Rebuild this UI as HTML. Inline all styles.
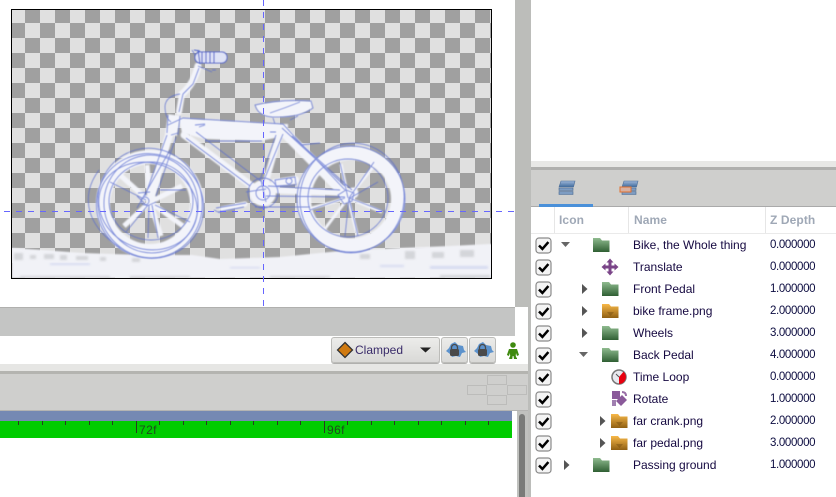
<!DOCTYPE html>
<html><head><meta charset="utf-8"><style>
html,body{margin:0;padding:0;background:#fff}
body{position:relative;width:836px;height:497px;overflow:hidden;font-family:"Liberation Sans",sans-serif}
div{position:absolute}
.r{left:633px;font-size:12px;color:#150840;line-height:14px;white-space:nowrap}
.z{left:770px;font-size:11.5px;letter-spacing:-.35px;color:#0c0c40;line-height:14px}
.h{top:213px;font-size:12px;letter-spacing:.1px;font-weight:bold;color:#9fa8b6;line-height:14px}
.btn{top:337px;height:26px;box-sizing:border-box;border:1px solid #bcbcb9;border-radius:3px;background:linear-gradient(#ececea,#d9d9d7);box-shadow:0 1px 0 #b0b0ae}
</style></head><body>
<div style="left:515px;top:0;width:13px;height:307px;background:#bcbdba"></div>
<div style="left:0;top:307px;width:515px;height:29px;background:#c4c5c4;border-top:1px solid #b0b0ae;box-sizing:border-box"></div>
<div style="left:0;top:364px;width:528px;height:7px;background:#e6e6e4"></div>
<div style="left:0;top:371px;width:528px;height:3px;background:#b4b4b0"></div>
<div style="left:0;top:374px;width:528px;height:37px;background:#cfcfcd;border-bottom:1px solid #b4b4b2;box-sizing:border-box"></div>
<div style="left:0;top:411px;width:512px;height:10px;background:#7589b3"></div>
<div style="left:0;top:421px;width:512px;height:17px;background:#00cc00"></div>
<div style="left:517px;top:411px;width:11px;height:86px;background:#c0c1be"></div>
<div style="left:519px;top:414px;width:6px;height:83px;background:#7a7b79;border-radius:3px 3px 0 0"></div>
<div style="left:528px;top:0;width:3px;height:497px;background:#bcbdba"></div>
<div style="left:531px;top:161px;width:305px;height:6px;background:#e8e8e6"></div>
<div style="left:531px;top:167px;width:305px;height:3px;background:#b0b0ae"></div>
<div style="left:531px;top:170px;width:305px;height:37px;background:#cfcfcd;border-bottom:1px solid #aaa;box-sizing:border-box"></div>
<div style="left:539px;top:204px;width:54px;height:3px;background:#4a90d9"></div>
<div style="left:531px;top:233px;width:305px;height:1px;background:#eaeaea"></div>
<div style="left:554px;top:207px;width:1px;height:26px;background:#e6e6e6"></div>
<div style="left:628px;top:207px;width:1px;height:26px;background:#e6e6e6"></div>
<div style="left:765px;top:207px;width:1px;height:26px;background:#e6e6e6"></div>
<div class="h" style="left:559px">Icon</div><div class="h" style="left:634px">Name</div><div class="h" style="left:770px">Z Depth</div>

<!-- Canvas -->
<div style="left:11px;top:9px;width:479px;height:268px;border:1.5px solid #000;background-color:#e0e0e0;background-image:conic-gradient(#a0a0a0 25%,transparent 0 50%,#a0a0a0 0 75%,transparent 0);background-size:30px 30px;background-position:-2px -2px"></div>

<svg width="836" height="497" style="position:absolute;left:0;top:0" xmlns="http://www.w3.org/2000/svg">
<defs>
<filter id="b" x="-5%" y="-5%" width="110%" height="110%"><feGaussianBlur stdDeviation=".7"/></filter>
<filter id="bl" x="-5%" y="-5%" width="110%" height="110%"><feGaussianBlur stdDeviation=".45"/></filter>
<filter id="b2" x="-5%" y="-5%" width="110%" height="110%"><feGaussianBlur stdDeviation="1"/></filter>
<linearGradient id="gf" x1="0" y1="0" x2="0" y2="1"><stop offset="0" stop-color="#8fbb8f"/><stop offset="1" stop-color="#2f5f33"/></linearGradient>
<linearGradient id="of" x1="0" y1="0" x2="0" y2="1"><stop offset="0" stop-color="#f8b848"/><stop offset="1" stop-color="#8f5f12"/></linearGradient>
<linearGradient id="st" x1="0" y1="0" x2="0" y2="1"><stop offset="0" stop-color="#9db6d8"/><stop offset="1" stop-color="#3f6a9c"/></linearGradient>
<symbol id="cb" width="18" height="18" viewBox="0 0 18 18" overflow="visible">
<rect x="1" y="1" width="15" height="15" rx="3" fill="#f4f4f4" stroke="#8a8a8a" stroke-width="1.2"/>
<path d="M4 8.5l3.4 3.4 6-6.8" fill="none" stroke="#000" stroke-width="2.5"/></symbol>
<symbol id="fg" width="17" height="15" viewBox="0 0 17 15"><path d="M0 1h7l2 2.5h7.5V15H0z" fill="url(#gf)"/></symbol>
<symbol id="fo" width="17" height="15" viewBox="0 0 17 15"><path d="M0 1h7l2 2.5h7.5V15H0z" fill="url(#of)"/><path d="M5 9h7l-3.500 4z" fill="#7a5010" opacity=".5"/></symbol>
<symbol id="ar" width="8" height="12" viewBox="0 0 8 12"><path d="M1 1l5.500 5-5.500 5z" fill="#555"/></symbol>
<symbol id="ad" width="12" height="8" viewBox="0 0 12 8"><path d="M1 1h9L5.500 6z" fill="#666"/></symbol>
<symbol id="lk" width="24" height="20" viewBox="0 0 24 20"><path d="M12 2l3 3 5 1 1 4 2 2-4 1-2 4-4-1-4 1-2-3-4-3 3-3 2-4z" fill="#5c92cc"/><path d="M8.500 9.500V7.500a3 3 0 0 1 6 0V9.500" fill="none" stroke="#4a4a4a" stroke-width="1.300"/><rect x="7" y="9" width="9" height="7" rx="1.500" fill="#4a4a4a"/></symbol>
<symbol id="stack" width="18" height="16" viewBox="0 0 18 16"><path d="M3 1h14l-1.500 6H1z" fill="url(#st)" stroke="#4e7099" stroke-width=".6"/><path d="M1 8h14v2.500H1zM1 11.500h14V14.500H1z" fill="#7d9cc2" stroke="#47678f" stroke-width=".6"/></symbol>
</defs>

<!-- Ground -->
<g clip-path="url(#cc)">
<clipPath id="cc"><rect x="12" y="10" width="479" height="268"/></clipPath>
<path d="M12 248l30 2 40 3 60 2 50 0 28 4 60-2 30-3 30-3 60-3 50-2 40-2 10 0V278H12z" fill="#f1f2f7" filter="url(#b)"/>
<g filter="url(#b2)" fill="#cfd0d4" opacity=".85">
<rect x="14" y="253" width="9" height="7"/><rect x="30" y="255" width="6" height="4"/><rect x="44" y="254" width="10" height="5"/><rect x="60" y="255" width="7" height="5"/><rect x="76" y="256" width="12" height="4"/><rect x="100" y="257" width="6" height="4"/><rect x="132" y="258" width="8" height="4"/>
<rect x="405" y="251" width="10" height="8"/><rect x="432" y="252" width="12" height="6"/><rect x="460" y="250" width="14" height="7"/><rect x="360" y="254" width="10" height="5"/>
<rect x="20" y="276" width="90" height="2"/><rect x="130" y="276" width="60" height="2"/><rect x="270" y="276" width="60" height="2"/><rect x="440" y="275" width="50" height="3"/>
</g>
<g filter="url(#b2)" fill="#d3d8f0" opacity=".9">
<rect x="50" y="263" width="40" height="2"/><rect x="380" y="265" width="24" height="2"/><rect x="430" y="266" width="58" height="3"/><rect x="230" y="267" width="30" height="1.500"/>
</g>
</g>

<!-- Bike: white body -->
<g filter="url(#b)" fill="none" stroke="#f3f4fa" stroke-linecap="round">
<ellipse cx="150" cy="204" rx="47" ry="47" stroke-width="14" transform="rotate(-20 150 204)"/>
<ellipse cx="351" cy="199" rx="47" ry="46" stroke-width="14"/>
<g stroke-width="5" stroke-linecap="butt">
<path d="M150 202L120 175M150 202L182 186M150 202L183 226M150 202L161 236M150 202L124 226M150 202L147 165"/>
<path d="M348 198L373 167M348 198L341 164M348 198L382 212M348 198L357 234M348 198L324 230M348 198L312 208" stroke-width="3"/>
</g>
<path d="M174 115L171 135" stroke-width="12" stroke-linecap="butt"/>
<path d="M170 132L150 200" stroke-width="8"/>
<path d="M179 112L182 94" stroke-width="6"/>
<path d="M182 94Q194 84 198 66" stroke-width="7"/>
<path d="M184 135L252 186" stroke-width="7"/>
<path d="M279 136L265 185" stroke-width="6"/>
<path d="M282 130L345 194" stroke-width="10"/>
<path d="M268 190L345 193" stroke-width="6"/>
<path d="M222 209L245 204" stroke-width="5"/>
<path d="M275 183L295 180" stroke-width="8"/>
<path d="M345 197l8-4" stroke-width="11"/>
</g>
<g filter="url(#b)" fill="#f3f4fa">
<path d="M179 118L283 124 290 135 260 141 205 139 182 133z"/>
<path d="M256 105Q280 99 311 101L312 108Q300 118 272 117 258 116 256 105z"/>
<circle cx="263" cy="193" r="13"/>
<rect x="276" y="124" width="12" height="4"/>
</g>
<!-- Bike: blue lines -->
<g fill="none" stroke="#5569cf" stroke-width=".9" opacity=".75" filter="url(#bl)">
<ellipse cx="150" cy="203" rx="52" ry="55" transform="rotate(-15 150 203)"/>
<ellipse cx="150" cy="206" rx="54" ry="52" transform="rotate(25 150 206)"/>
<ellipse cx="151" cy="204" rx="47" ry="49" transform="rotate(-10 151 204)"/>
<ellipse cx="151" cy="201" rx="42" ry="39"/>
<ellipse cx="148" cy="206" rx="50" ry="43" transform="rotate(20 148 206)"/>
<path d="M99 170Q84 190 90 212 96 232 120 248"/>
<path d="M110 182L146 200M148 205L126 232M152 205L158 238M149 205L148 238M170 150L137 208M155 205L190 222M160 190L186 190"/>
<ellipse cx="351" cy="199" rx="54" ry="53"/>
<ellipse cx="352" cy="198" rx="52" ry="55" transform="rotate(12 352 198)"/>
<ellipse cx="348" cy="198" rx="40" ry="39"/>
<path d="M349 198L374 162M340 163L348 198M349 198L386 212M349 198L358 236M349 198L345 236M345 198L310 210M350 198L378 182"/>
<path d="M168 125L183 118 283 124 292 134 345 190M178 133L171 135M167 135L145 196M176 137L156 196M168 115L167 133M180 116L178 135"/>
<path d="M186 138L250 186M196 132L262 182M205 141L262 141M283 134L262 185M276 135L260 180M292 136L352 190M282 128L345 186"/>
<path d="M266 196L345 197M268 186L340 190M255 207L310 207"/>
<path d="M180 94Q166 96 165 106 165 118 171 122M179 112L183 94 193 84 199 68M192 50L198 60M198 66L212 72M212 70h4"/>
<path d="M255 105Q280 99 311 101L313 108Q300 118 272 117 258 116 255 105zM270 113Q285 108 300 102M273 118l2 6M298 116l-8 4"/>
<circle cx="263" cy="193" r="15"/><circle cx="263" cy="193" r="7"/><path d="M246 192l20-3M261 180l5 22"/>
<path d="M216 208l30-5M218 212l26-5M214 210l6 3M275 180l20-3 1 8-20 1z"/><circle cx="289" cy="181" r="3"/>
<path d="M338 195l8-5 8 3-2 8-8 3z"/><circle cx="145" cy="201" r="4"/><path d="M138 193l12-1M137 196l10 10 9-4"/>
<path d="M195 125l10-1M205 125l-6 2M270 132l6 0M300 145l20-2"/>
</g>
<!-- Grip -->
<g filter="url(#bl)">
<rect x="195" y="52" width="32" height="11" rx="5" fill="#dfe3f6" stroke="#4f64cc"/>
<path d="M198 50l2 14M202 52v11M206 52v11M210 52v11M214 52v11M194 50l6 1" stroke="#4f64cc" stroke-width="1.100" fill="none"/>
</g>

<!-- Guides -->
<path d="M263.500 0V307" stroke="#6666ff" stroke-dasharray="6 6" stroke-width="1" fill="none"/>
<path d="M4 211.500H515" stroke="#6666ff" stroke-dasharray="6 6" stroke-width="1" fill="none"/>

<!-- Timeline ticks -->
<g stroke="#2a3a20" stroke-width="1">
<path d="M18.500 421v4M42.500 421v4M65.500 421v4M89.500 421v4M112.500 421v4M159.500 421v4M183.500 421v4M206.500 421v4M230.500 421v4M253.500 421v4M277.500 421v4M300.500 421v4M347.500 421v4M371.500 421v4M394.500 421v4M418.500 421v4M441.500 421v4M465.500 421v4M488.500 421v4"/>
<path d="M136.500 421v12M324.500 421v12"/>
</g>
<!-- Pad -->
<g fill="none" stroke="#bcbcba"><rect x="487.500" y="375.500" width="19" height="9"/><rect x="467.500" y="385.500" width="19" height="9"/><rect x="507.500" y="385.500" width="19" height="9"/><rect x="487.500" y="395.500" width="19" height="9"/></g>
<!-- Tab icons -->
<use href="#stack" x="558" y="180"/>
<use href="#stack" x="621" y="180"/>
<rect x="620" y="187" width="11" height="5" fill="#d8b0a0" stroke="#e07030"/>

<!-- Checkboxes -->
<use href="#cb" x="535" y="237"/><use href="#cb" x="535" y="259"/><use href="#cb" x="535" y="281"/><use href="#cb" x="535" y="303"/><use href="#cb" x="535" y="325"/><use href="#cb" x="535" y="347"/><use href="#cb" x="535" y="369"/><use href="#cb" x="535" y="391"/><use href="#cb" x="535" y="413"/><use href="#cb" x="535" y="435"/><use href="#cb" x="535" y="457"/>

<!-- Tree arrows -->
<use href="#ad" x="560" y="241"/><use href="#ar" x="581" y="283"/><use href="#ar" x="581" y="305"/><use href="#ar" x="581" y="327"/><use href="#ad" x="578" y="351"/><use href="#ar" x="599" y="415"/><use href="#ar" x="599" y="437"/><use href="#ar" x="563" y="459"/>

<!-- Folders -->
<use href="#fg" x="593" y="237"/><use href="#fg" x="602" y="281"/><use href="#fo" x="602" y="303"/><use href="#fg" x="602" y="325"/><use href="#fg" x="602" y="347"/><use href="#fo" x="611" y="413"/><use href="#fo" x="611" y="435"/><use href="#fg" x="593" y="457"/>

<!-- Translate -->
<path d="M610 258.500l3.500 4h-2V265.500h3v-2l4 3.500-4 3.500v-2h-3v3h2l-3.500 4-3.500-4h2v-3h-3v2l-4-3.500 4-3.500v2h3V262.500h-2z" fill="#7a4488"/>
<!-- Time loop -->
<circle cx="619" cy="377" r="7" fill="#e8e8ee" stroke="#777" stroke-width="1.500"/>
<path d="M619 377l4.500-5.300A7 7 0 0 1 619 384z" fill="#e8000f"/>
<path d="M619 377l-3-3" stroke="#555" stroke-width="1"/>
<!-- Rotate -->
<path d="M612 391h8v8h-8z" fill="#8a5a9a"/>
<path d="M616 401l6-6 5 5-6 6z" fill="#8a5a9a"/>
<path d="M612 400h4v6h-4z" fill="#a07fb0"/>
<path d="M622 392q4 0 4 4" stroke="#9a70a8" stroke-width="2" fill="none"/>
<!-- Stickman -->
<g fill="#3f8a10"><circle cx="513" cy="345" r="2.800"/><path d="M509 349h8l2 6-2 1-1-3-.3 3 1 2 .3 0v1h-3l-.5-3h-.8l-.5 3h-3v-1l1-2-.3-3-1 3-2-1z"/></g>
</svg>

<!-- Text labels timeline -->
<div style="left:139px;top:423px;font-size:12px;letter-spacing:.4px;color:#1f4a1f;line-height:14px">72f</div>
<div style="left:327px;top:423px;font-size:12px;letter-spacing:.4px;color:#1f4a1f;line-height:14px">96f</div>

<!-- Buttons -->
<div class="btn" style="left:331px;width:109px"></div>
<div class="btn" style="left:441px;width:27px"></div>
<div class="btn" style="left:469px;width:27px"></div>
<svg width="836" height="497" style="position:absolute;left:0;top:0">
<path d="M345 342.500l7.500 7.500-7.500 7.500-7.500-7.500z" fill="#d07a10" stroke="#333" stroke-width="1.300"/>
<path d="M420 347.500h11l-5.500 5z" fill="#222"/>
<use href="#lk" x="443" y="340"/><use href="#lk" x="471" y="340"/>
</svg>
<div style="left:355px;top:343px;font-size:12px;color:#3a2c6a;line-height:14px">Clamped</div>

<!-- Rows -->
<div class="r" style="top:238px">Bike, the Whole thing</div><div class="z" style="top:238px">0.000000</div>
<div class="r" style="top:260px">Translate</div><div class="z" style="top:260px">0.000000</div>
<div class="r" style="top:282px">Front Pedal</div><div class="z" style="top:282px">1.000000</div>
<div class="r" style="top:304px">bike frame.png</div><div class="z" style="top:304px">2.000000</div>
<div class="r" style="top:326px">Wheels</div><div class="z" style="top:326px">3.000000</div>
<div class="r" style="top:348px">Back Pedal</div><div class="z" style="top:348px">4.000000</div>
<div class="r" style="top:370px">Time Loop</div><div class="z" style="top:370px">0.000000</div>
<div class="r" style="top:392px">Rotate</div><div class="z" style="top:392px">1.000000</div>
<div class="r" style="top:414px">far crank.png</div><div class="z" style="top:414px">2.000000</div>
<div class="r" style="top:436px">far pedal.png</div><div class="z" style="top:436px">3.000000</div>
<div class="r" style="top:458px">Passing ground</div><div class="z" style="top:458px">1.000000</div>
</body></html>
